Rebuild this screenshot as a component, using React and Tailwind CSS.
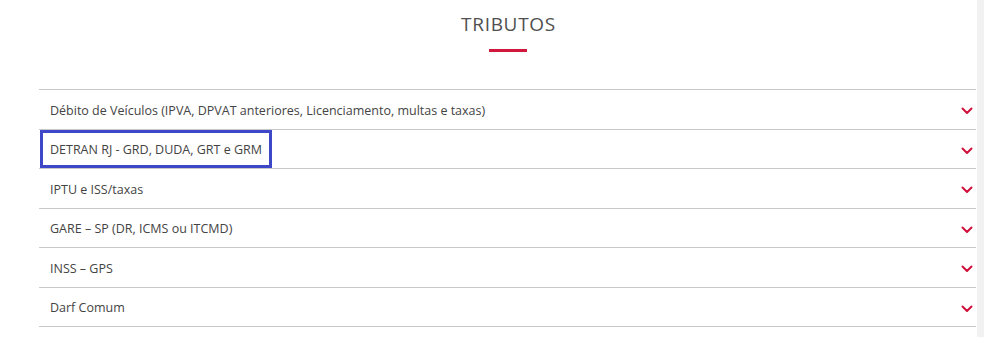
import React from 'react';

const tributos = [
    "Débito de Veículos (IPVA, DPVAT anteriores, Licenciamento, multas e taxas)",
    "DETRAN RJ - GRD, DUDA, GRT e GRM",
    "IPTU e ISS/taxas",
    "GARE – SP (DR, ICMS ou ITCMD)",
    "INSS – GPS",
    "Darf Comum",
];

const Chevron = () => (
    <svg width="12" height="8" viewBox="0 0 12 8" fill="none" className="text-[#d0103a] mt-[3px]">
        <path d="M1.5 1.5 L6 6 L10.5 1.5" stroke="currentColor" strokeWidth="2" strokeLinecap="round" strokeLinejoin="round" />
    </svg>
);

const App = () => {
    return (
        <div className="flex w-[984px] h-[337px] bg-white overflow-hidden" style={{ fontFamily: '"Open Sans", sans-serif' }}>
            <div className="flex-1 pl-[39px] pr-px">
                {/* Titulo */}
                <div className="flex flex-col items-center pt-[11px]">
                    <h1 className="text-[19px] leading-[26px] tracking-[0.7px] pl-[2px] text-[#505050]">TRIBUTOS</h1>
                    <div className="mt-[12px] w-[38px] h-[3px] bg-[#d0183a]" />
                </div>

                {/* Lista */}
                <div className="mt-[37px] border-b border-[#c9c9c9]">
                    {tributos.map((item, index) => (
                        <div
                            key={index}
                            className="h-[39.5px] border-t border-[#c9c9c9] flex items-center justify-between pl-[1px] pr-[3px] pt-[1px]"
                        >
                            <span
                                className={`text-[12.5px] leading-[17px] text-[#444] px-[10px] pt-[11px] pb-[10px] ${index === 1 ? "outline-[3px] outline-solid outline-[#3f47c9] -outline-offset-[3px]" : ""}`}
                            >
                                {item}
                            </span>
                            <Chevron />
                        </div>
                    ))}
                </div>
            </div>
            <div className="w-[7px] bg-[#f1f1f1]" />
        </div>
    );
};

export default App;
